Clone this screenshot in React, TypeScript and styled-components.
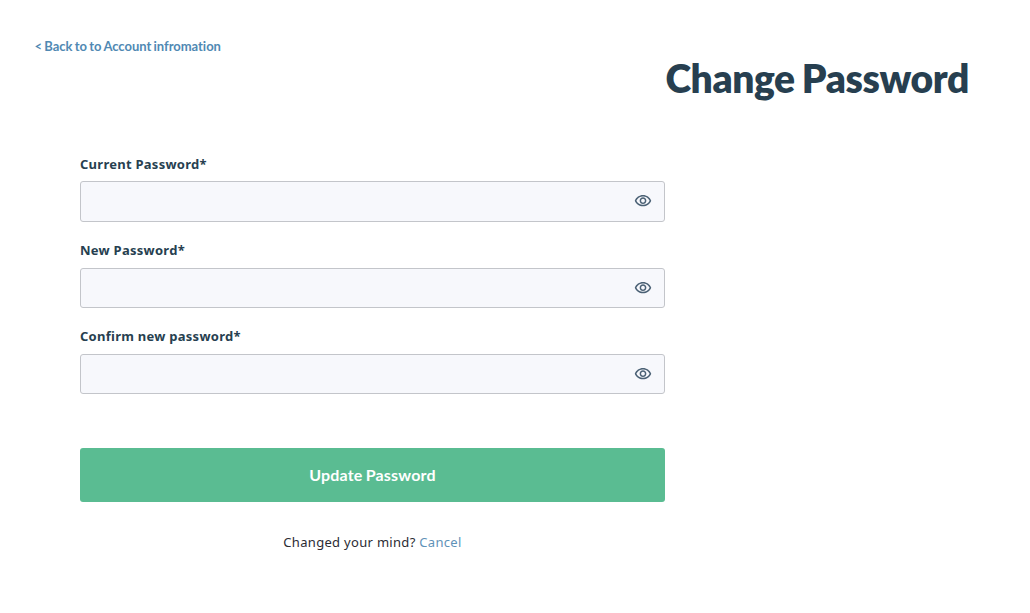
import React, { useState } from "react";
import styled, { createGlobalStyle } from "styled-components";

const fields = [
  { name: "currentPassword", label: "Current Password*" },
  { name: "newPassword", label: "New Password*" },
  { name: "confirmPassword", label: "Confirm new password*" },
];

interface PasswordFieldProps {
  name: string;
  label: string;
}

const PasswordField: React.FC<PasswordFieldProps> = ({ name, label }) => {
  const [visible, setVisible] = useState(false);

  return (
    <Field>
      <Label htmlFor={name}>{label}</Label>
      <InputBox>
        <Input id={name} name={name} type={visible ? "text" : "password"} />
        <EyeButton
          type="button"
          aria-label="Toggle password visibility"
          onClick={() => setVisible(!visible)}
        >
          <svg width="18" height="18" viewBox="0 0 24 24" fill="currentColor">
            <path d="M12 6c3.79 0 7.17 2.13 8.82 5.5C19.17 14.87 15.79 17 12 17s-7.17-2.13-8.82-5.5C4.83 8.13 8.21 6 12 6m0-2C7 4 2.73 7.11 1 11.5 2.73 15.89 7 19 12 19s9.27-3.11 11-7.5C21.27 7.11 17 4 12 4zm0 5c1.38 0 2.5 1.12 2.5 2.5S13.38 14 12 14s-2.5-1.12-2.5-2.5S10.62 9 12 9m0-2c-2.48 0-4.5 2.02-4.5 4.5S9.52 16 12 16s4.5-2.02 4.5-4.5S14.48 7 12 7z" />
          </svg>
        </EyeButton>
      </InputBox>
    </Field>
  );
};

const App: React.FC = () => {
  return (
    <>
      <GlobalStyle />
      <Page>
        <BackLink href="#">&lt; Back to to Account infromation</BackLink>
        <Title>Change Password</Title>
        <Form onSubmit={(e) => e.preventDefault()}>
          {fields.map((field) => (
            <PasswordField key={field.name} {...field} />
          ))}
          <SubmitButton type="submit">Update Password</SubmitButton>
          <Footer>
            Changed your mind? <CancelLink href="#">Cancel</CancelLink>
          </Footer>
        </Form>
      </Page>
    </>
  );
};

export default App;

const GlobalStyle = createGlobalStyle`
  * {
    box-sizing: border-box;
  }

  body {
    margin: 0;
    background: #fff;
    font-family: "Noto Sans", sans-serif;
  }
`;

const Page = styled.main`
  display: flex;
  flex-direction: column;
  min-height: 613px;
  padding: 38px 61px 0 34.5px;
`;

const BackLink = styled.a`
  align-self: flex-start;
  color: #5089b3;
  font: 700 13px/16px Lato, sans-serif;
  letter-spacing: -0.03px;
  word-spacing: -0.8px;
  text-decoration: none;
`;

const Title = styled.h1`
  align-self: flex-end;
  margin: 0;
  color: #273f50;
  font: 800 39px/48px Lato, sans-serif;
  letter-spacing: -0.4px;
  word-spacing: -1.5px;
`;

const Form = styled.form`
  width: 585px;
  margin: 51.5px 0 0 45.5px;
`;

const Field = styled.div`
  display: flex;
  flex-direction: column;
  height: 86.4px;
`;

const Label = styled.label`
  height: 27.9px;
  color: #273f50;
  font-size: 13px;
  font-weight: 700;
  line-height: 20px;
  letter-spacing: 0.26px;
`;

const InputBox = styled.div`
  display: flex;
  align-items: center;
  height: 40.2px;
  padding-right: 12px;
  border: 1px solid #c3c5ca;
  border-radius: 3px;
  background: #f7f8fc;
`;

const Input = styled.input`
  flex: 1;
  height: 100%;
  padding: 0 12px;
  border: none;
  outline: none;
  background: transparent;
  font: inherit;
`;

const EyeButton = styled.button`
  display: flex;
  padding: 0;
  border: none;
  background: none;
  color: #4b6175;
  cursor: pointer;
`;

const SubmitButton = styled.button`
  display: block;
  width: 100%;
  height: 54px;
  margin-top: 35.3px;
  border: none;
  border-radius: 3px;
  background: #5abc92;
  color: #fff;
  font: 700 16px/20px Lato, sans-serif;
  letter-spacing: 0.2px;
  word-spacing: -1px;
  cursor: pointer;
`;

const Footer = styled.p`
  margin: 30px 0 0;
  color: #2b2b33;
  font-size: 13px;
  line-height: 20px;
  letter-spacing: 0.31px;
  text-align: center;
`;

const CancelLink = styled.a`
  color: #5f92b8;
  text-decoration: none;
`;
